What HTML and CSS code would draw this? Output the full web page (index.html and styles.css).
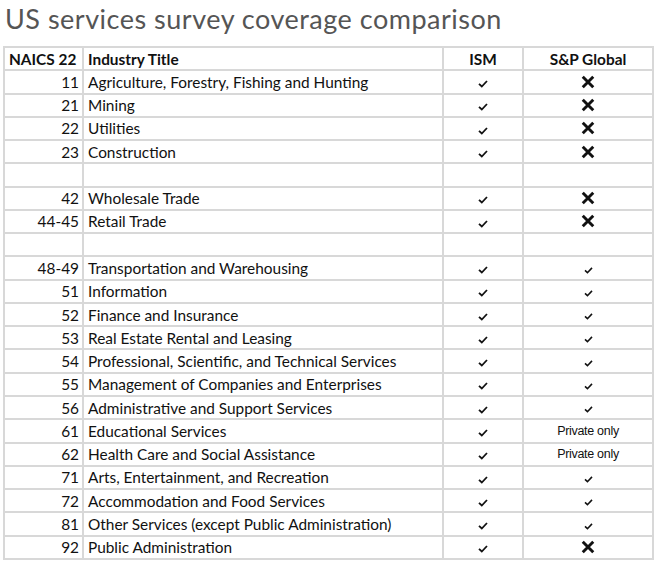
FILE: index.html
```html
<!DOCTYPE html>
<html>
<head>
<meta charset="utf-8">
<link rel="stylesheet" href="styles.css">
</head>
<body>
<svg width="0" height="0" class="defs">
  <defs>
    <symbol id="chk" viewBox="0 0 10 8"><polyline points="1,3.8 3.8,6.5 9,1" fill="none" stroke="#111" stroke-width="1.8"/></symbol>
    <symbol id="crs" viewBox="0 0 12 12"><path d="M1.5 1.5 L10.5 10.5 M10.5 1.5 L1.5 10.5" stroke="#111" stroke-width="2.5" fill="none"/></symbol>
  </defs>
</svg>
<h1 class="title">US services survey coverage comparison</h1>
<table class="grid">
  <colgroup><col class="c1"><col class="c2"><col class="c3"><col class="c4"></colgroup>
  <thead>
    <tr><th class="code">NAICS 22</th><th class="name">Industry Title</th><th>ISM</th><th>S&amp;P Global</th></tr>
  </thead>
  <tbody>
    <tr><td class="num">11</td><td class="name">Agriculture, Forestry, Fishing and Hunting</td><td class="m"><svg class="ck"><use href="#chk"/></svg></td><td class="m"><svg class="x"><use href="#crs"/></svg></td></tr>
    <tr><td class="num">21</td><td class="name">Mining</td><td class="m"><svg class="ck"><use href="#chk"/></svg></td><td class="m"><svg class="x"><use href="#crs"/></svg></td></tr>
    <tr><td class="num">22</td><td class="name">Utilities</td><td class="m"><svg class="ck"><use href="#chk"/></svg></td><td class="m"><svg class="x"><use href="#crs"/></svg></td></tr>
    <tr><td class="num">23</td><td class="name">Construction</td><td class="m"><svg class="ck"><use href="#chk"/></svg></td><td class="m"><svg class="x"><use href="#crs"/></svg></td></tr>
    <tr><td class="num"></td><td class="name"></td><td class="m"></td><td class="m"></td></tr>
    <tr><td class="num">42</td><td class="name">Wholesale Trade</td><td class="m"><svg class="ck"><use href="#chk"/></svg></td><td class="m"><svg class="x"><use href="#crs"/></svg></td></tr>
    <tr><td class="num">44-45</td><td class="name">Retail Trade</td><td class="m"><svg class="ck"><use href="#chk"/></svg></td><td class="m"><svg class="x"><use href="#crs"/></svg></td></tr>
    <tr><td class="num"></td><td class="name"></td><td class="m"></td><td class="m"></td></tr>
    <tr><td class="num">48-49</td><td class="name">Transportation and Warehousing</td><td class="m"><svg class="ck"><use href="#chk"/></svg></td><td class="m"><svg class="ck sm"><use href="#chk"/></svg></td></tr>
    <tr><td class="num">51</td><td class="name">Information</td><td class="m"><svg class="ck"><use href="#chk"/></svg></td><td class="m"><svg class="ck sm"><use href="#chk"/></svg></td></tr>
    <tr><td class="num">52</td><td class="name">Finance and Insurance</td><td class="m"><svg class="ck"><use href="#chk"/></svg></td><td class="m"><svg class="ck sm"><use href="#chk"/></svg></td></tr>
    <tr><td class="num">53</td><td class="name">Real Estate Rental and Leasing</td><td class="m"><svg class="ck"><use href="#chk"/></svg></td><td class="m"><svg class="ck sm"><use href="#chk"/></svg></td></tr>
    <tr><td class="num">54</td><td class="name">Professional, Scientific, and Technical Services</td><td class="m"><svg class="ck"><use href="#chk"/></svg></td><td class="m"><svg class="ck sm"><use href="#chk"/></svg></td></tr>
    <tr><td class="num">55</td><td class="name">Management of Companies and Enterprises</td><td class="m"><svg class="ck"><use href="#chk"/></svg></td><td class="m"><svg class="ck sm"><use href="#chk"/></svg></td></tr>
    <tr><td class="num">56</td><td class="name">Administrative and Support Services</td><td class="m"><svg class="ck"><use href="#chk"/></svg></td><td class="m"><svg class="ck sm"><use href="#chk"/></svg></td></tr>
    <tr><td class="num">61</td><td class="name">Educational Services</td><td class="m"><svg class="ck"><use href="#chk"/></svg></td><td class="m priv">Private only</td></tr>
    <tr><td class="num">62</td><td class="name">Health Care and Social Assistance</td><td class="m"><svg class="ck"><use href="#chk"/></svg></td><td class="m priv">Private only</td></tr>
    <tr><td class="num">71</td><td class="name">Arts, Entertainment, and Recreation</td><td class="m"><svg class="ck"><use href="#chk"/></svg></td><td class="m"><svg class="ck sm"><use href="#chk"/></svg></td></tr>
    <tr><td class="num">72</td><td class="name">Accommodation and Food Services</td><td class="m"><svg class="ck"><use href="#chk"/></svg></td><td class="m"><svg class="ck sm"><use href="#chk"/></svg></td></tr>
    <tr><td class="num">81</td><td class="name">Other Services (except Public Administration)</td><td class="m"><svg class="ck"><use href="#chk"/></svg></td><td class="m"><svg class="ck sm"><use href="#chk"/></svg></td></tr>
    <tr><td class="num">92</td><td class="name">Public Administration</td><td class="m"><svg class="ck"><use href="#chk"/></svg></td><td class="m"><svg class="x"><use href="#crs"/></svg></td></tr>
  </tbody>
</table>
</body>
</html>
```
FILE: styles.css
```css
html, body {
  margin: 0;
  padding: 0;
  background: #ffffff;
}
body {
  padding: 0 0 0 3px;
}
.defs {
  position: absolute;
  width: 0;
  height: 0;
}
.title {
  margin: 0;
  padding: 3px 0 0 2px;
  height: 46px;
  box-sizing: border-box;
  font-family: "Lato", "Liberation Sans", sans-serif;
  font-weight: 400;
  font-size: 27px;
  line-height: 32px;
  letter-spacing: 0.5px;
  color: #555555;
}
.grid {
  border-collapse: collapse;
  table-layout: fixed;
  width: 649px;
  font-family: "Lato", "Liberation Sans", sans-serif;
  font-size: 15.4px;
  color: #111;
}
.c1 { width: 79px; }
.c2 { width: 360px; }
.c3 { width: 80px; }
.c4 { width: 130px; }
.grid th, .grid td {
  border: 2px solid #d8d8d8;
  height: 21.27px;
  padding: 0 4px;
  line-height: 20px;
  white-space: nowrap;
  overflow: hidden;
}
.grid th {
  font-weight: 700;
  text-align: center;
}
.grid th.code { text-align: left; padding-left: 4px; }
.grid th.name, .grid td.name { text-align: left; }
.grid td.num { text-align: right; padding-right: 3px; }
.grid td.m { text-align: center; }
.ck {
  width: 10px;
  height: 8px;
  vertical-align: middle;
}
.ck.sm {
  width: 9px;
  height: 7px;
}
.x {
  width: 14px;
  height: 14px;
  vertical-align: -1px;
}
.priv {
  font-family: "Liberation Sans", Arial, sans-serif;
  font-size: 12.5px;
  letter-spacing: -0.3px;
}
```
